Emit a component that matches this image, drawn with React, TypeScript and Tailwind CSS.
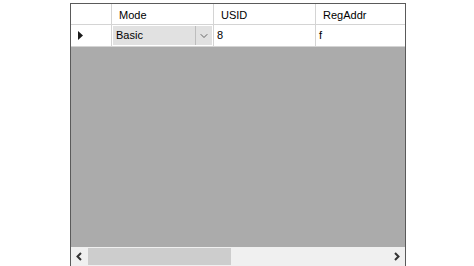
import { ChevronDown } from "lucide-react"

const font = { fontFamily: '"Liberation Sans", Arial, sans-serif' }

function Triangle() {
  return (
    <svg width="5" height="9" viewBox="0 0 5 9">
      <path d="M0 0 L5 4.5 L0 9 Z" fill="#1a1a1a" />
    </svg>
  )
}

function Arrow({ dir }: { dir: "left" | "right" }) {
  return (
    <svg width="9" height="9" viewBox="0 0 9 9">
      <path
        d={dir === "left" ? "M6 1 L2.5 4.5 L6 8" : "M3 1 L6.5 4.5 L3 8"}
        fill="none"
        stroke="#333"
        strokeWidth="2"
      />
    </svg>
  )
}

export default function App() {
  return (
    <div className="w-[474px] h-[266px] bg-white pl-[70px] pt-[3px] overflow-hidden text-[11px] text-black" style={font}>
      <div className="w-[336px] h-[263px] border-l border-t border-r border-[#5a5a5a] flex flex-col">
        {/* header */}
        <div className="flex h-[21px] border-b border-[#d4d4d4] bg-white">
          <div className="w-[41px] border-r border-[#d4d4d4]" />
          <div className="w-[102px] border-r border-[#d4d4d4] pl-[7px] pt-[3px]">Mode</div>
          <div className="w-[102px] border-r border-[#d4d4d4] pl-[7px] pt-[3px]">USID</div>
          <div className="flex-1 pl-[7px] pt-[3px]">RegAddr</div>
        </div>
        {/* data row */}
        <div className="flex h-[22px] border-b border-[#d4d4d4] bg-white">
          <div className="w-[41px] border-r border-[#d4d4d4] flex items-center pl-[7px]">
            <Triangle />
          </div>
          <div className="w-[102px] border-r border-[#d4d4d4] p-px flex">
            <div className="flex-1 bg-[#e1e1e1] flex items-center pl-[3px]">Basic</div>
            <div className="w-[17px] bg-[#e1e1e1] border-l border-[#bdbdbd] flex items-center justify-center">
              <ChevronDown size={12} strokeWidth={1.6} color="#444" />
            </div>
          </div>
          <div className="w-[102px] border-r border-[#d4d4d4] flex items-center pl-[3px]">8</div>
          <div className="flex-1 flex items-center pl-[3px]">f</div>
        </div>
        {/* empty area */}
        <div className="flex-1 bg-[#ababab]" />
        {/* horizontal scrollbar */}
        <div className="h-[19px] bg-[#f0f0f0] flex items-center">
          <div className="w-[17px] h-full flex items-center justify-center">
            <Arrow dir="left" />
          </div>
          <div className="flex-1 h-[17px] flex">
            <div className="w-[143px] h-full bg-[#cdcdcd]" />
          </div>
          <div className="w-[17px] h-full flex items-center justify-center">
            <Arrow dir="right" />
          </div>
        </div>
      </div>
    </div>
  )
}
